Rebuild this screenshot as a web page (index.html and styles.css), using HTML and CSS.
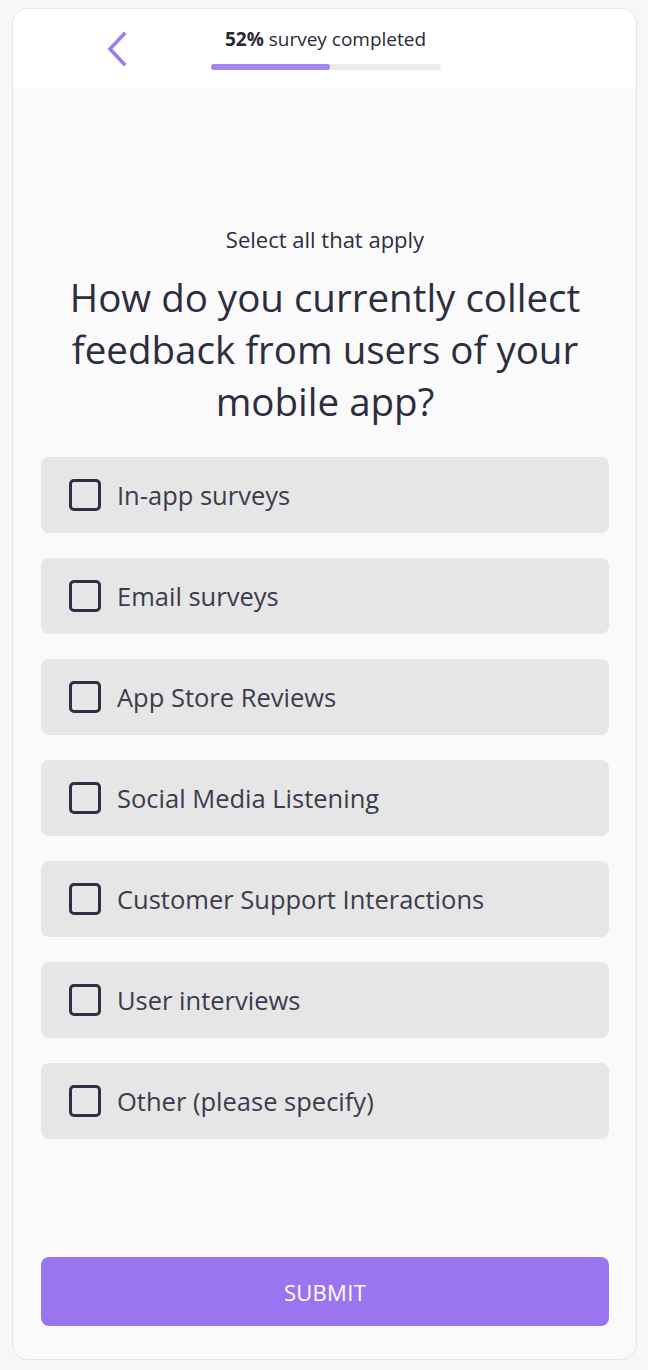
FILE: index.html
```html
<!doctype html>
<html lang="en">
  <head>
    <meta charset="UTF-8" />
    <meta name="viewport" content="width=device-width, initial-scale=1.0" />
    <title>Survey</title>
    <link rel="stylesheet" href="styles.css">
  </head>
  <body>
    <div class="card">
      <div class="top-bar">
        <button class="back-btn" aria-label="Back">
          <svg width="24" height="36" viewBox="0 0 24 36">
            <path d="M19 3 L5 18 L19 33" fill="none" stroke="#9b7bef" stroke-width="3.6" stroke-linecap="square" stroke-linejoin="miter"/>
          </svg>
        </button>
        <div class="progress">
          <div class="progress-label"><b>52%</b> survey completed</div>
          <div class="progress-track"><div class="progress-fill" style="width: 52%"></div></div>
        </div>
      </div>

      <div class="content">
        <p class="hint">Select all that apply</p>
        <h1 class="question">How do you currently collect feedback from users of your mobile app?</h1>

        <ul class="options">
          <li class="option"><span class="box"></span>In-app surveys</li>
          <li class="option"><span class="box"></span>Email surveys</li>
          <li class="option"><span class="box"></span>App Store Reviews</li>
          <li class="option"><span class="box"></span>Social Media Listening</li>
          <li class="option"><span class="box"></span>Customer Support Interactions</li>
          <li class="option"><span class="box"></span>User interviews</li>
          <li class="option"><span class="box"></span>Other (please specify)</li>
        </ul>

        <button class="submit">SUBMIT</button>
      </div>
    </div>
  </body>
</html>
```

FILE: styles.css
```css
body {
  margin: 0;
  padding: 8px 11px 9px 12px;
  background-color: #f6f7f7;
  font-family: "Open Sans", "Noto Sans", sans-serif;
  color: #2d2d40;
}

.card {
  background-color: #fafafa;
  border: 1px solid #e4e5e5;
  border-radius: 16px;
  overflow: hidden;
}

.top-bar {
  background-color: #fff;
  height: 79px;
  display: flex;
  justify-content: center;
  position: relative;
}

.back-btn {
  position: absolute;
  left: 92px;
  top: 22px;
  background: none;
  border: none;
  padding: 0;
  cursor: pointer;
}

.progress {
  width: 230px;
  padding-top: 17px;
  padding-left: 2px;
}

.progress-label {
  font-size: 19px;
  line-height: 26px;
  text-align: center;
  white-space: nowrap;
  color: #2a2a35;
}

.progress-label b {
  font-weight: 700;
}

.progress-track {
  margin-top: 12px;
  height: 6px;
  border-radius: 3px;
  background-color: #ebebeb;
}

.progress-fill {
  height: 6px;
  border-radius: 3px;
  background-color: #a286ec;
}

.content {
  padding: 137px 27px 33px 28px;
}

.hint {
  margin: 0;
  font-size: 22px;
  line-height: 28px;
  text-align: center;
  color: #2d2d40;
}

.question {
  margin: 18px 0 0;
  font-size: 38.5px;
  line-height: 52px;
  font-weight: 400;
  text-align: center;
  color: #2d2d40;
}

.options {
  list-style: none;
  margin: 30px 0 0;
  padding: 0;
  display: flex;
  flex-direction: column;
  gap: 25px;
}

.option {
  height: 76px;
  background-color: #e6e6e6;
  border-radius: 8px;
  display: flex;
  align-items: center;
  padding-left: 28px;
  font-size: 25.5px;
  color: #3b3b4d;
  cursor: pointer;
}

.box {
  width: 26px;
  height: 26px;
  border: 3px solid #2f2f45;
  border-radius: 5px;
  margin-right: 16px;
  box-sizing: content-box;
}

.submit {
  display: block;
  width: 100%;
  height: 69px;
  margin-top: 118px;
  background-color: #9b75f0;
  color: #fff;
  border: none;
  border-radius: 8px;
  font-family: "Open Sans", "Noto Sans", sans-serif;
  font-size: 22px;
  font-weight: 500;
  letter-spacing: 0.3px;
  cursor: pointer;
}
```
